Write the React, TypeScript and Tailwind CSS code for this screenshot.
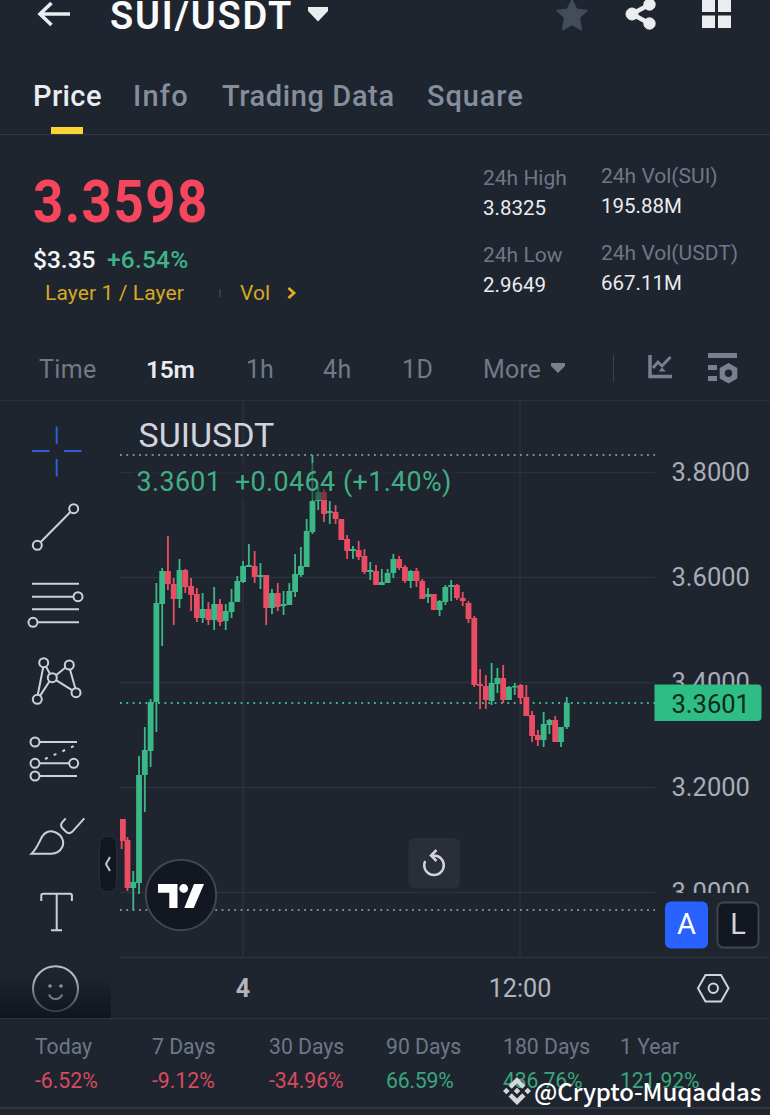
import React from 'react';

type Candle = [string, number, number, number, number];

// [direction, high, body top, body bottom, low]
const candles: Candle[] = [
  ['r', 819, 819, 841, 849], ['r', 837, 840, 888, 891], ['g', 871, 882, 888, 910], ['g', 756, 775, 883, 894],
  ['g', 727, 750, 775, 812], ['g', 699, 702, 751, 767], ['g', 583, 603, 702, 732], ['g', 568, 571, 604, 646],
  ['r', 536, 571, 584, 590], ['r', 578, 584, 599, 625], ['g', 559, 570, 599, 608], ['r', 569, 570, 587, 593],
  ['r', 578, 586, 595, 611], ['r', 588, 594, 618, 622], ['g', 593, 609, 618, 623], ['r', 602, 609, 620, 625],
  ['g', 587, 604, 620, 630], ['r', 599, 604, 622, 626], ['g', 604, 611, 621, 630], ['g', 589, 602, 612, 618],
  ['g', 576, 581, 602, 602], ['g', 561, 566, 582, 583], ['g', 544, 565, 567, 567], ['r', 551, 566, 577, 583],
  ['g', 563, 575, 577, 589], ['r', 575, 575, 608, 625], ['g', 589, 593, 608, 614], ['r', 583, 593, 607, 611],
  ['g', 591, 604, 606, 615], ['g', 583, 591, 605, 605], ['g', 554, 574, 592, 597], ['g', 547, 566, 575, 577],
  ['g', 519, 531, 567, 567], ['g', 455, 501, 532, 534], ['g', 487, 492, 501, 510], ['r', 489, 492, 514, 522],
  ['g', 501, 511, 513, 524], ['r', 505, 512, 519, 524], ['r', 519, 519, 540, 540], ['r', 535, 539, 551, 559],
  ['g', 546, 549, 551, 559], ['r', 541, 550, 557, 560], ['r', 549, 556, 572, 574], ['g', 562, 570, 572, 580],
  ['r', 565, 571, 585, 585], ['g', 569, 582, 585, 585], ['g', 569, 573, 583, 583], ['g', 554, 559, 573, 578],
  ['r', 556, 559, 568, 570], ['r', 565, 567, 581, 583], ['g', 570, 571, 581, 588], ['r', 568, 571, 581, 587],
  ['r', 579, 581, 599, 599], ['g', 588, 594, 597, 603], ['r', 594, 594, 610, 610], ['g', 600, 601, 610, 616],
  ['g', 585, 587, 602, 605], ['g', 580, 585, 587, 601], ['r', 584, 585, 598, 600], ['r', 592, 598, 601, 606],
  ['r', 601, 603, 619, 623], ['r', 616, 618, 685, 687], ['r', 669, 684, 686, 709], ['r', 675, 686, 700, 709],
  ['g', 663, 683, 701, 705], ['g', 668, 678, 684, 693], ['r', 665, 678, 700, 703], ['g', 686, 687, 700, 700],
  ['g', 683, 686, 687, 695], ['r', 684, 685, 698, 704], ['r', 685, 697, 716, 716], ['r', 711, 715, 736, 742],
  ['r', 730, 735, 740, 746], ['g', 712, 724, 740, 747], ['g', 719, 720, 725, 734], ['r', 716, 720, 742, 742],
  ['g', 727, 727, 742, 747], ['g', 697, 703, 727, 729],
];

const gridLines = [
  { y: 472.5, label: '3.8000' },
  { y: 577.5, label: '3.6000' },
  { y: 682.5, label: '3.4000' },
  { y: 787.5, label: '3.2000' },
  { y: 892.5, label: '3.0000' },
];

const returns = [
  { label: 'Today', value: '-6.52%', up: false },
  { label: '7 Days', value: '-9.12%', up: false },
  { label: '30 Days', value: '-34.96%', up: false },
  { label: '90 Days', value: '66.59%', up: true },
  { label: '180 Days', value: '436.76%', up: true },
  { label: '1 Year', value: '121.92%', up: true },
];

const Header = () => (
  <header className="flex h-[30px] items-start pl-[37px]">
    <svg className="mt-px h-7 w-[34px]" viewBox="0 0 34 28" fill="none" stroke="#eaecef" strokeWidth="3.6">
      <path d="M33 13H3M14.5 2 3 13l11.5 11" />
    </svg>
    <h1 className="ml-[39px] mt-px w-[183px] whitespace-nowrap text-[38px] font-semibold leading-[30px] tracking-[1.8px] text-[#fafafa]">SUI/USDT</h1>
    <svg className="ml-[15px] mt-[6px] h-4 w-5" viewBox="0 0 20 16" fill="#eaecef">
      <path d="M0 1h20v4L10 15.500 0 5z" />
    </svg>
    <svg className="ml-[228px] mt-[-1px] h-8 w-8" viewBox="0 0 32 32" fill="#434c5a" stroke="#434c5a" strokeWidth="1.500" strokeLinejoin="round">
      <path d="m16 1 4.500 9.200 10.500 1.300-7.700 6.900 2 12.100L16 25.500l-9.300 5 2-12.100L1 11.500l10.500-1.300z" />
    </svg>
    <svg className="ml-[36px] mt-[-2px] h-8 w-[34px]" viewBox="0 0 34 32" fill="#eaecef" stroke="#eaecef">
      <path d="M25.500 6.500 8 16l17.500 9.500" fill="none" strokeWidth="4.500" />
      <circle cx="8" cy="16" r="6" />
      <circle cx="25.500" cy="6.500" r="5.700" />
      <circle cx="25.500" cy="25.500" r="5.700" />
    </svg>
    <svg className="ml-[44px] mt-[-1px] h-[30px] w-[30px]" viewBox="0 0 30 30" fill="#eaecef">
      <path d="M0 0h13v13H0zM16 0h13v13H16zM0 16.500h13V29H0zM16 16.500h13V29H16z" />
    </svg>
  </header>
);

const Tabs = () => (
  <nav className="flex h-[105px] items-end border-b border-[#323943] pl-[33px] text-[29px] font-medium text-[#848e9c]">
    <div className="flex w-[100px] flex-col text-[#eaecef]">
      <span className="leading-[38px] tracking-[0.4px]">Price</span>
      <span className="ml-[18px] mt-3 h-[7px] w-8 bg-[#fcd535]" />
    </div>
    <span className="w-[89px] pb-[19px] leading-[38px] tracking-[1.2px]">Info</span>
    <span className="w-[205px] whitespace-nowrap pb-[19px] leading-[38px] tracking-[0.6px]">Trading Data</span>
    <span className="pb-[19px] leading-[38px] tracking-[0.9px]">Square</span>
  </nav>
);

interface StatProps {
  label: string;
  value: string;
}

const Stat = ({ label, value }: StatProps) => (
  <div className="h-[77px] whitespace-nowrap">
    <p className="text-[21px] leading-[28px] text-[#6f7786]">{label}</p>
    <p className="mt-px text-[20.500px] leading-[30px] text-[#eaecef]">{value}</p>
  </div>
);

const PriceSummary = () => (
  <section className="flex h-[205px]">
    <div className="w-[483px] pl-[33px] pt-[36px]">
      <p className="w-[200px] origin-left scale-x-[0.88] text-[60px] font-bold leading-[62px] tracking-[1.7px] text-[#f6465d]">3.3598</p>
      <p className="mt-[11px] flex text-[24.500px] font-medium leading-[32px]">
        <span className="w-[74px] text-[#f5f6f7]">$3.35</span>
        <span className="tracking-[0.2px] text-[#3db386]">+6.54%</span>
      </p>
      <div className="flex items-center pl-3 pt-1 text-[21px] leading-[26px] text-[#d6a823]">
        <span className="w-[174px] tracking-[0.1px]">Layer 1 / Layer</span>
        <span className="h-2 w-0.5 bg-[#363d49]" />
        <span className="ml-[19px] w-[47px]">Vol</span>
        <svg className="h-3.5 w-2.5" viewBox="0 0 10 14" fill="none" stroke="#e0ac20" strokeWidth="2.800">
          <path d="m1.500 2 5.500 5-5.500 5" />
        </svg>
      </div>
    </div>
    <div className="w-[118px] pt-[29px]">
      <Stat label="24h High" value="3.8325" />
      <Stat label="24h Low" value="2.9649" />
    </div>
    <div className="pt-[27px]">
      <Stat label="24h Vol(SUI)" value="195.88M" />
      <Stat label="24h Vol(USDT)" value="667.11M" />
    </div>
  </section>
);

const Intervals = () => (
  <section className="flex h-[61px] items-center border-b border-[#2a313b] pl-[39px] text-[25px] tracking-[0.4px] text-[#717987]">
    <span className="w-[107px]">Time</span>
    <span className="w-[100px] text-[24.500px] font-semibold tracking-[-0.3px] text-[#eaecef]">15m</span>
    <span className="w-[77px] tracking-[0px]">1h</span>
    <span className="w-[79px]">4h</span>
    <span className="w-[81px]">1D</span>
    <span className="w-[68px] tracking-[0.1px]">More</span>
    <svg className="mb-1 h-2.5 w-3.5" viewBox="0 0 14 10" fill="#79808f">
      <path d="M0 0h14v3L7 10 0 3z" />
    </svg>
    <span className="mb-1 ml-[48px] h-[27px] w-px bg-[#3a414c]" />
    <svg className="mb-1.5 ml-[34px] h-6 w-6" viewBox="0 0 24 24" fill="none" stroke="#79808f" strokeWidth="3.500">
      <path d="M2 0v21.500h22" />
      <path d="m5 13 5-6 4 4L22.500 2" strokeWidth="2.800" />
      <path d="m10.500 16.500 3.500-4 4 4z" fill="#79808f" stroke="none" />
    </svg>
    <svg className="mb-1 ml-[36px] h-[31px] w-[30px]" viewBox="0 0 30 31">
      <path d="M0 0h29v5H0zM0 12h9v5H0zM0 23h9v5H0z" fill="#79808f" />
      <path d="m20.500 10 8.800 5v10.500l-8.800 5-8.800-5V15z" fill="#79808f" />
      <circle cx="20.500" cy="20.300" r="3.700" fill="#1f252f" />
    </svg>
  </section>
);

const toolIcons: React.ReactNode[] = [
  <path stroke="#2e5fd6" d="M30.700 5.500V23M30.700 38v17.500M6 30h17.500M38 30h17.500" />,
  <>
    <path d="m14.700 44 29.700-30" />
    <circle cx="11.300" cy="47.300" r="4.500" />
    <circle cx="47.700" cy="10.700" r="4.500" />
  </>,
  <>
    <path d="M6 8.700h47M6 21.700h41.500M6 34.300h47M11.500 47.300H53" />
    <circle cx="52" cy="21.700" r="4.500" />
    <circle cx="7" cy="47.300" r="4.500" />
  </>,
  <>
    <path d="m17.200 15.200-5.400 27.600M20 14.500l4 7.400M30 23.300l9.500-7.800M23.500 29.300l-9.300 14.300M30 28.200l16 10M44 17.500l5.300 18.700" />
    <circle cx="17.700" cy="10.700" r="4.500" />
    <circle cx="43.300" cy="13" r="4.500" />
    <circle cx="26.300" cy="25.700" r="4.500" />
    <circle cx="11.300" cy="47.300" r="4.500" />
    <circle cx="50" cy="40.700" r="4.500" />
  </>,
  <>
    <path d="M13.500 13H51M13.500 34.300h29.700M13.500 47H51" />
    <path d="m19 30 29-13" strokeDasharray="3 6.500" />
    <circle cx="9" cy="13" r="4.500" />
    <circle cx="9" cy="34.300" r="4.500" />
    <circle cx="47.700" cy="34.300" r="4.500" />
    <circle cx="9" cy="47" r="4.500" />
  </>,
  <>
    <path d="M5.500 47.700c5-4.500 7.500-11 10.500-17 2.500-4.500 7.500-6.500 12.500-4.700 7.500 2.700 10.500 9.700 7.500 15.500-2.200 4.200-6 6.200-11 6.200z" />
    <path d="m39.700 12.300-3.500 4c-1.700 2.200-1.500 4 .3 6l3.500 3.500c2 1.800 4.300 1.800 6.200 0l12.100-13.500" />
  </>,
  <path d="M15.300 18v-5.500c0-1.200.6-1.800 1.800-1.800h27c1.200 0 1.800.6 1.800 1.800V18M30.700 10.700v36.600M25 47.300h11" />,
  <g stroke="url(#fade)">
    <circle cx="29.500" cy="28.700" r="22.500" />
    <path d="M23 34.500c2.500 6 10.700 6 13.200 0" stroke="#747a85" />
    <circle cx="24" cy="26" r="1.800" fill="#8b909b" stroke="none" />
    <circle cx="35" cy="26" r="1.800" fill="#8b909b" stroke="none" />
  </g>,
];

const Toolbar = () => (
  <aside className="relative h-[617px] w-[112px] overflow-hidden pt-[11px]">
    <div className="absolute bottom-0 left-0 h-12 w-[111px] bg-gradient-to-b from-transparent to-[#121520]" />
    {toolIcons.map((icon, i) => (
      <div key={i} className="flex h-[77px] items-center pl-[26px]">
        <svg className="relative h-[60px] w-[60px]" viewBox="0 0 60 60" fill="none" stroke="#cdd0d9" strokeWidth="2">
          <defs>
            <linearGradient id="fade" x1="0" y1="0" x2="0" y2="1">
              <stop offset="0.200" stopColor="#b9bdc7" />
              <stop offset="1" stopColor="#3a3e48" />
            </linearGradient>
          </defs>
          {icon}
        </svg>
      </div>
    ))}
  </aside>
);

const Chart = () => (
  <svg className="block h-[617px] w-[658px]" viewBox="112 401 658 617" fontFamily="Roboto, sans-serif">
    <g stroke="#2b323c" strokeWidth="1.500">
      <path d="M243 401v556M520 401v556M120 957.500h650" />
      {gridLines.map((line) => (
        <path key={line.label} d={`M120 ${line.y}h535`} />
      ))}
    </g>
    <path d="M120 455h535M120 910h535" stroke="#858a94" strokeWidth="1.800" strokeDasharray="1.800 4.550" />
    <path d="M120 703h535" stroke="#3fb98b" strokeWidth="1.800" strokeDasharray="1.800 4.550" />
    {candles.map(([dir, high, top, bottom, low], i) => {
      const x = 121.7 + i * 5.78;
      return (
        <g key={i} fill={dir === 'g' ? '#3bb888' : '#ea4d63'}>
          <rect x={x - 0.9} y={high} width="1.800" height={low - high} />
          <rect x={Math.max(x - 2.9, 120)} y={top} width="5.800" height={Math.max(bottom - top, 1.5)} />
        </g>
      );
    })}
    {/* legend backdrop dims the candles under the text */}
    <rect x="132" y="463" width="325" height="37" fill="#1f252f" opacity="0.550" />
    <text x="138.500" y="447" fontSize="34" fill="#d1d4dc">SUIUSDT</text>
    <g fontSize="26.800" fill="#3fb083">
      <text x="136.500" y="490.500" letterSpacing="0.400">3.3601</text>
      <text x="235" y="490.500" letterSpacing="0.400">+0.0464</text>
      <text x="343" y="490.500" letterSpacing="0.400">(+1.40%)</text>
    </g>
    <g fontSize="25.500" fill="#a9adb8">
      {gridLines.map((line) => (
        <text key={line.label} x="671.500" y={line.y + 8.700}>{line.label}</text>
      ))}
    </g>
    <path d="M657 893h113v60H657z" fill="#1f252f" />
    <path d="M654.500 684.500h103a4 4 0 0 1 4 4v28.500a4 4 0 0 1-4 4h-103z" fill="#2ebd85" />
    <text x="671.500" y="712.500" fontSize="25.500" fill="#0c2a20">3.3601</text>
    <g fontSize="25.200" fill="#b2b5be" textAnchor="middle">
      <text x="243" y="996.500" fontWeight="700">4</text>
      <text x="520" y="996.500">12:00</text>
    </g>
    <g>
      <rect x="665" y="901.500" width="43" height="47" rx="6" fill="#2962ff" />
      <rect x="717.500" y="902.500" width="41" height="45" rx="6" fill="#131722" stroke="#434651" strokeWidth="1.800" />
      <g fontSize="29" textAnchor="middle">
        <text x="686.500" y="934" fill="#fff">A</text>
        <text x="738" y="934" fill="#d1d4dc">L</text>
      </g>
    </g>
    <g fill="none" stroke="#d1d4dc" strokeWidth="2">
      <path d="m705.500 975-7.500 13.200 7.500 13.200h15.500l7.500-13.200-7.500-13.200z" />
      <circle cx="713.300" cy="988.200" r="4.700" />
    </g>
    <g>
      <circle cx="181" cy="895" r="35.200" fill="#131722" stroke="#434651" strokeWidth="2" />
      <path d="M158 884h19.500v24h-8.200v-15.300H158zM194 884h10l-10.300 24h-9.400z" fill="#fff" />
      <circle cx="183.700" cy="888.500" r="4.400" fill="#fff" />
    </g>
    <g>
      <rect x="408.500" y="838" width="51.500" height="50.500" rx="6" fill="#2a2e39" />
      <path d="M431 855.500h3a9.800 9.800 0 1 1-9.800 9.800c0-1.700.4-3 1-4.300M436.500 850l-5.500 5.500 5.500 5.500" fill="none" stroke="#d1d4dc" strokeWidth="2.500" />
    </g>
  </svg>
);

const Returns = () => (
  <section className="flex h-[91px] border-b-2 border-t border-b-[#303741] border-t-[#2c333d] pl-[35px] pt-[13px]">
    {returns.map((item) => (
      <div key={item.label} className="w-[117px] shrink-0 whitespace-nowrap">
        <p className="text-[21.200px] leading-[30px] text-[#6f7786]">{item.label}</p>
        <p className={`mt-1 text-[21.200px] leading-[30px] ${item.up ? 'tracking-[-0.2px] text-[#3aa57c]' : 'text-[#d94a5f]'}`}>{item.value}</p>
      </div>
    ))}
  </section>
);

const App: React.FC = () => {
  return (
    <div className="relative h-[1115px] w-[770px] overflow-hidden bg-[#1f252f] font-['Roboto','Noto_Sans',sans-serif]">
      <Header />
      <Tabs />
      <PriceSummary />
      <Intervals />
      <main className="relative flex">
        <Toolbar />
        <Chart />
        <div className="absolute left-[99px] top-[435px] flex h-14 w-[18px] items-center justify-center rounded-lg border border-[#292d38] bg-[#131722]">
          <svg className="h-4 w-2" viewBox="0 0 8 16" fill="none" stroke="#c3c6ce" strokeWidth="2">
            <path d="M6 1 2 8l4 7" />
          </svg>
        </div>
      </main>
      <Returns />
      <div className="absolute left-[503px] top-[1075px] flex h-8 items-center whitespace-nowrap">
        <svg className="h-7 w-7" viewBox="0 0 28 28" fill="#d5d6d8">
          <path d="m14 0 8.500 8.500-3.300 3.300L14 6.600l-5.200 5.200-3.300-3.300zM14 28l8.500-8.500-3.300-3.300-5.200 5.200-5.200-5.200-3.300 3.300zM3.300 10.700 6.600 14l-3.300 3.300L0 14zM24.700 10.700 28 14l-3.300 3.300-3.300-3.300zM14 10.700l3.300 3.300-3.300 3.300-3.300-3.300z" />
        </svg>
        <span className="ml-[3px] font-['Noto_Sans_CJK_SC',sans-serif] text-[24px] font-medium leading-8 tracking-[-0.1px] text-white">@Crypto-Muqaddas</span>
      </div>
    </div>
  );
};

export default App;
